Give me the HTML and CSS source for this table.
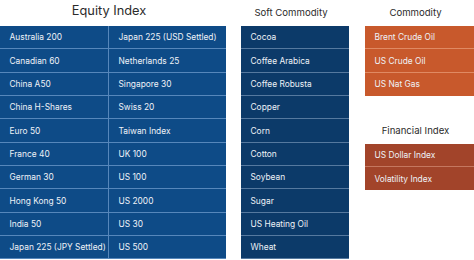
FILE: index.html
```html
<!DOCTYPE html>
<html>
<head>
<meta charset="utf-8">
<link rel="stylesheet" href="styles.css">
</head>
<body>
<div class="page">
  <section class="group equity">
    <h2 class="title title-lg">Equity Index</h2>
    <div class="table two">
      <div class="cell">Australia 200</div><div class="cell">Japan 225 (USD Settled)</div>
      <div class="cell">Canadian 60</div><div class="cell">Netherlands 25</div>
      <div class="cell">China A50</div><div class="cell">Singapore 30</div>
      <div class="cell">China H-Shares</div><div class="cell">Swiss 20</div>
      <div class="cell">Euro 50</div><div class="cell">Taiwan Index</div>
      <div class="cell">France 40</div><div class="cell">UK 100</div>
      <div class="cell">German 30</div><div class="cell">US 100</div>
      <div class="cell">Hong Kong 50</div><div class="cell">US 2000</div>
      <div class="cell">India 50</div><div class="cell">US 30</div>
      <div class="cell">Japan 225 (JPY Settled)</div><div class="cell">US 500</div>
    </div>
  </section>
  <section class="group soft">
    <h2 class="title">Soft Commodity</h2>
    <div class="table one">
      <div class="cell">Cocoa</div>
      <div class="cell">Coffee Arabica</div>
      <div class="cell">Coffee Robusta</div>
      <div class="cell">Copper</div>
      <div class="cell">Corn</div>
      <div class="cell">Cotton</div>
      <div class="cell">Soybean</div>
      <div class="cell">Sugar</div>
      <div class="cell">US Heating Oil</div>
      <div class="cell">Wheat</div>
    </div>
  </section>
  <div class="stack">
    <section class="group commodity">
      <h2 class="title">Commodity</h2>
      <div class="table one">
        <div class="cell">Brent Crude Oil</div>
        <div class="cell">US Crude Oil</div>
        <div class="cell">US Nat Gas</div>
      </div>
    </section>
    <section class="group financial">
      <h2 class="title">Financial Index</h2>
      <div class="table one">
        <div class="cell">US Dollar Index</div>
        <div class="cell">Volatility Index</div>
      </div>
    </section>
  </div>
</div>
</body>
</html>
```

FILE: styles.css
```css
html, body {
  margin: 0;
  padding: 0;
  background: #ffffff;
}
body {
  font-family: Inter, "Noto Sans", sans-serif;
  width: 474px;
  height: 260px;
  overflow: hidden;
}
.page {
  display: flex;
  align-items: flex-start;
}
.group {
  display: flex;
  flex-direction: column;
}
.equity { width: 226px; }
.soft { width: 108px; margin-left: 15px; }
.stack {
  width: 109px;
  margin-left: 16px;
  display: flex;
  flex-direction: column;
}
.financial { margin-top: 21.5px; }
.title {
  margin: 0;
  height: 26px;
  box-sizing: border-box;
  padding: 6px 8px 0 0;
  font-size: 9.6px;
  line-height: 13px;
  font-weight: 400;
  color: #2b2b2b;
  text-align: center;
}
.title-lg {
  font-size: 12.8px;
  padding-top: 3px;
  line-height: 16px;
}
.table {
  display: grid;
  grid-auto-rows: 23.35px;
}
.table.two { grid-template-columns: 109px 117px; }
.table.one { grid-template-columns: 1fr; }
.cell {
  display: flex;
  align-items: center;
  padding-left: 9.5px;
  font-size: 8.4px;
  color: #eef2f7;
  white-space: nowrap;
  box-sizing: border-box;
}
.equity .cell {
  background: #0e4b87;
  border-bottom: 1px solid #5687bb;
}
.equity .cell:nth-child(odd) {
  border-right: 1px solid #5687bb;
}
.soft .cell {
  background: #0c3a69;
  border-bottom: 1px solid #56799f;
}
.commodity .cell {
  background: #c8592c;
  border-bottom: 1px solid #e08a63;
}
.commodity .cell:last-child { border-bottom: none; }
.financial .cell {
  background: #a2442a;
  border-bottom: 1px solid #c5775f;
}
.financial .cell:last-child { border-bottom: none; }
```
